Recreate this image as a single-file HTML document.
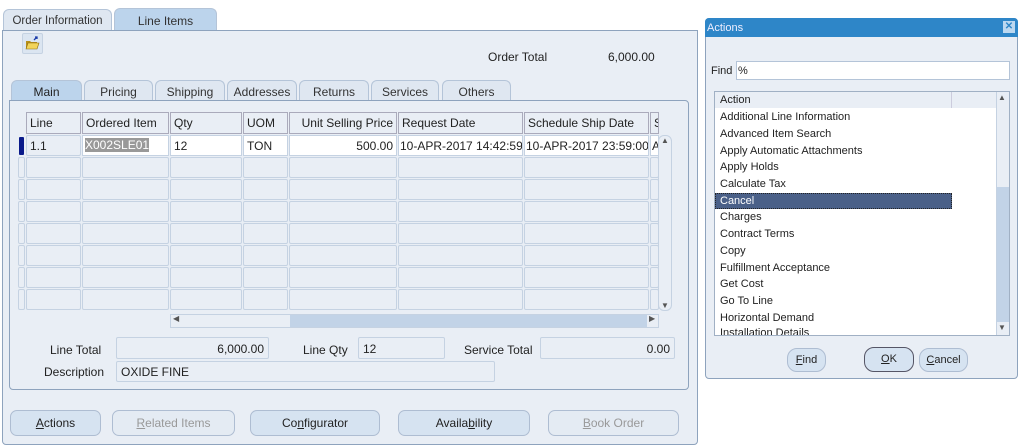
<!DOCTYPE html><html><head><style>
body{margin:0;width:1024px;height:447px;background:#fff;font-family:"Liberation Sans",sans-serif;font-size:12px;color:#222;position:relative;overflow:hidden}
.a{position:absolute;box-sizing:border-box}
.tab{border:1px solid #b4c4d8;border-bottom:none;border-radius:6px 6px 0 0;background:#dfe7f1;text-align:center;color:#333}
.f{background:#e9eef5;border:1px solid #c5d2e2;border-radius:2px}
.w{background:#fff;border:1px solid #c5d2e2}
.h{background:#e9eef5;border:1px solid #aab;padding:3px 3px;font-size:12px}
.btn{border:1px solid #aebdd2;border-radius:7px;background:#d6e3f1;text-align:center;line-height:24px;font-size:12px}
.dis{color:#999;background:#e4ebf3}
.it{position:absolute;left:720px;font-size:11px}
</style></head><body>
<div class="a tab" style="left:3px;top:9px;width:109px;height:22px;line-height:22px;font-size:11.5px">Order Information</div>
<div class="a tab" style="left:114px;top:8px;width:103px;height:23px;line-height:24px;background:#bcd4ec">Line Items</div>
<div class="a" style="left:2px;top:30px;width:696px;height:415px;background:#e9eef5;border:1px solid #8ea3bd;border-radius:0 0 4px 4px"></div>
<div class="a" style="left:22px;top:33px;width:21px;height:21px;background:#dbe5f1;border:1px solid #c5d2e2;border-radius:2px">
<svg width="19" height="19" viewBox="0 0 19 19"><path d="M3 7h4l1 1h6v7H3z" fill="#b8901a"/><path d="M3 15l2-6h11l-2 6z" fill="#f2d45a" stroke="#8a6a10" stroke-width="0.6"/><path d="M11 6l3-3M12 3h2v2" stroke="#1a3aa8" stroke-width="1.3" fill="none"/></svg></div>
<div class="a" style="left:488px;top:50px">Order Total</div>
<div class="a" style="left:608px;top:50px">6,000.00</div>
<div class="a tab" style="left:11px;top:80px;width:71px;height:21px;line-height:22px;background:#bcd4ec;color:#222">Main</div>
<div class="a tab" style="left:84px;top:80px;width:69px;height:21px;line-height:22px">Pricing</div>
<div class="a tab" style="left:155px;top:80px;width:70px;height:21px;line-height:22px">Shipping</div>
<div class="a tab" style="left:227px;top:80px;width:70px;height:21px;line-height:22px">Addresses</div>
<div class="a tab" style="left:299px;top:80px;width:70px;height:21px;line-height:22px">Returns</div>
<div class="a tab" style="left:371px;top:80px;width:68px;height:21px;line-height:22px">Services</div>
<div class="a tab" style="left:442px;top:80px;width:69px;height:21px;line-height:22px">Others</div>
<div class="a" style="left:9px;top:100px;width:680px;height:290px;border:1px solid #8ea3bd;border-radius:0 4px 4px 4px;background:#e9eef5"></div>
<div class="a h" style="left:26px;top:112px;width:55px;height:22px">Line</div>
<div class="a h" style="left:82px;top:112px;width:87px;height:22px">Ordered Item</div>
<div class="a h" style="left:170px;top:112px;width:72px;height:22px">Qty</div>
<div class="a h" style="left:243px;top:112px;width:45px;height:22px">UOM</div>
<div class="a h" style="left:289px;top:112px;width:108px;height:22px;text-align:right">Unit Selling Price</div>
<div class="a h" style="left:398px;top:112px;width:125px;height:22px">Request Date</div>
<div class="a h" style="left:524px;top:112px;width:125px;height:22px">Schedule Ship Date</div>
<div class="a h" style="left:650px;top:112px;width:9px;height:22px;overflow:hidden">S</div>
<div class="a" style="left:19px;top:137px;width:5px;height:18px;background:#0a1a8a;border-radius:1px"></div>
<div class="a f" style="left:26px;top:135px;width:55px;height:21px;padding:3px">1.1</div>
<div class="a w" style="left:82px;top:135px;width:87px;height:21px;padding:2px"><span style="background:#999;color:#fff">X002SLE01</span></div>
<div class="a w" style="left:170px;top:135px;width:72px;height:21px;padding:3px">12</div>
<div class="a w" style="left:243px;top:135px;width:45px;height:21px;padding:3px">TON</div>
<div class="a w" style="left:289px;top:135px;width:108px;height:21px;padding:3px;text-align:right">500.00</div>
<div class="a w" style="left:398px;top:135px;width:125px;height:21px;padding:3px 1px;white-space:nowrap;overflow:hidden">10-APR-2017 14:42:59</div>
<div class="a w" style="left:524px;top:135px;width:125px;height:21px;padding:3px 1px;white-space:nowrap;overflow:hidden">10-APR-2017 23:59:00</div>
<div class="a w" style="left:650px;top:135px;width:9px;height:21px;padding:3px 1px;overflow:hidden">A</div>
<div id="rows"></div>
<script>
var xs=[[18,7],[26,55],[82,87],[170,72],[243,45],[289,108],[398,125],[524,125],[650,9]],h='';
for(var r=0;r<7;r++){var y=157+r*22;xs.forEach(function(c){h+='<div class="a f" style="left:'+c[0]+'px;top:'+y+'px;width:'+c[1]+'px;height:21px"></div>'});}
document.getElementById('rows').innerHTML=h;
</script>
<div class="a" style="left:658px;top:135px;width:14px;height:176px;border:1px solid #c5d2e2;border-radius:6px;background:#e9eef5;font-size:8px;text-align:center;color:#555">▲<div style="position:absolute;bottom:0;width:100%">▼</div></div>
<div class="a" style="left:170px;top:314px;width:489px;height:14px;background:#e9eef5;border:1px solid #c5d2e2"></div>
<div class="a" style="left:290px;top:315px;width:357px;height:12px;background:#c2d3e7"></div>
<div class="a" style="left:173px;top:314px;font-size:8px;color:#555">◀</div>
<div class="a" style="left:649px;top:314px;font-size:8px;color:#555">▶</div>
<div class="a" style="left:50px;top:343px">Line Total</div>
<div class="a f" style="left:116px;top:337px;width:153px;height:22px;padding:4px;text-align:right">6,000.00</div>
<div class="a" style="left:303px;top:343px">Line Qty</div>
<div class="a f" style="left:358px;top:337px;width:87px;height:22px;padding:4px">12</div>
<div class="a" style="left:464px;top:343px">Service Total</div>
<div class="a f" style="left:540px;top:337px;width:135px;height:22px;padding:4px;text-align:right">0.00</div>
<div class="a" style="left:44px;top:365px">Description</div>
<div class="a f" style="left:116px;top:361px;width:379px;height:21px;padding:3px 4px">OXIDE FINE</div>
<div class="a btn" style="left:10px;top:410px;width:91px;height:26px"><u>A</u>ctions</div>
<div class="a btn dis" style="left:112px;top:410px;width:123px;height:26px"><u>R</u>elated Items</div>
<div class="a btn" style="left:250px;top:410px;width:130px;height:26px">Co<u>n</u>figurator</div>
<div class="a btn" style="left:398px;top:410px;width:132px;height:26px">Availa<u>b</u>ility</div>
<div class="a btn dis" style="left:548px;top:410px;width:131px;height:26px"><u>B</u>ook Order</div>
<div class="a" style="left:705px;top:18px;width:313px;height:361px;background:#e9eef5;border:1px solid #8ea3bd;border-radius:4px"></div>
<div class="a" style="left:705px;top:18px;width:313px;height:19px;background:#2e86c8;color:#eef;padding:4px 2px;font-size:11px;border-radius:4px 4px 0 0">Actions</div>
<div class="a" style="left:1003px;top:21px;width:12px;height:12px;background:#bcd8f0;color:#2e86c8;font-size:10px;line-height:11px;text-align:center;font-weight:bold">✕</div>
<div class="a" style="left:711px;top:65px;font-size:11px">Find</div>
<div class="a" style="left:736px;top:61px;width:274px;height:19px;background:#fff;border:1px solid #b4c4d8;padding:3px 1px;font-size:11px">%</div>
<div class="a" style="left:714px;top:91px;width:296px;height:245px;background:#fff;border:1px solid #a0b0c4"></div>
<div class="a" style="left:715px;top:92px;width:237px;height:16px;background:#e9eef5;border-right:1px solid #ccd;padding:2px 5px;font-size:11px">Action</div>
<div class="a" style="left:952px;top:92px;width:44px;height:16px;background:#e9eef5"></div>
<div class="a" style="left:996px;top:92px;width:13px;height:243px;background:#e9eef5;border-left:1px solid #c5d2e2"></div>
<div class="a" style="left:997px;top:187px;width:12px;height:135px;background:#c2d3e7"></div>
<div class="a" style="left:998px;top:93px;font-size:8px;color:#555">▲</div>
<div class="a" style="left:998px;top:323px;font-size:8px;color:#555">▼</div>
<div class="a" style="left:715px;top:193px;width:237px;height:16px;background:#4a6088;border:1px dotted #222"></div>
<div class="it" style="top:111px">Additional Line Information</div>
<div class="it" style="top:128px">Advanced Item Search</div>
<div class="it" style="top:145px">Apply Automatic Attachments</div>
<div class="it" style="top:161px">Apply Holds</div>
<div class="it" style="top:178px">Calculate Tax</div>
<div class="it" style="top:195px;color:#fff">Cancel</div>
<div class="it" style="top:211px">Charges</div>
<div class="it" style="top:228px">Contract Terms</div>
<div class="it" style="top:245px">Copy</div>
<div class="it" style="top:262px">Fulfillment Acceptance</div>
<div class="it" style="top:278px">Get Cost</div>
<div class="it" style="top:295px">Go To Line</div>
<div class="it" style="top:312px">Horizontal Demand</div>
<div class="a" style="left:715px;top:328px;width:281px;height:7px;overflow:hidden"><div style="position:absolute;left:5px;top:-1px;font-size:11px">Installation Details</div></div>
<div class="a btn" style="left:787px;top:348px;width:39px;height:24px;line-height:22px;border-radius:10px;font-size:11px"><u>F</u>ind</div>
<div class="a btn" style="left:864px;top:347px;width:50px;height:25px;line-height:23px;border:1px solid #556;border-radius:10px;font-size:11px"><u>O</u>K</div>
<div class="a btn" style="left:919px;top:348px;width:49px;height:24px;line-height:22px;border-radius:10px;font-size:11px"><u>C</u>ancel</div>
</body></html>
